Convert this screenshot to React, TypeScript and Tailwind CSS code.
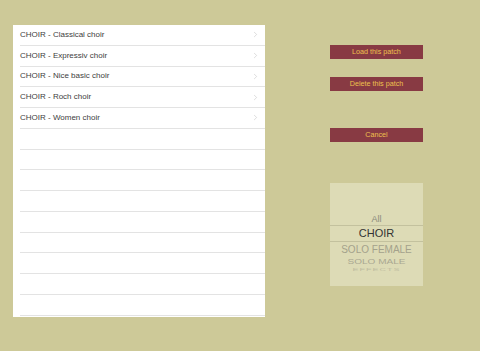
import { ChevronRight } from 'lucide-react';

const patches = [
  'CHOIR - Classical choir',
  'CHOIR - Expressiv choir',
  'CHOIR - Nice basic choir',
  'CHOIR - Roch choir',
  'CHOIR - Women choir',
];

const emptyRows = 9;

function PatchRow({ label }: { label?: string }) {
  return (
    <div className="pl-[7px] h-[20.75px]">
      <div className="h-full flex items-center justify-between pr-[5px] border-b border-[#e3e3e3]">
        <span className="text-[8px] text-[#404040]">{label}</span>
        {label && <ChevronRight size={9} strokeWidth={1.5} className="text-[#c4c4c4]" />}
      </div>
    </div>
  );
}

function ActionButton({ children, className = '' }: { children: string; className?: string }) {
  return (
    <button className={`w-[93px] h-[14px] bg-[#883a43] text-[#eec04e] text-[7.2px] leading-none flex items-center justify-center ${className}`}>
      {children}
    </button>
  );
}

export default function App() {
  return (
    <div
      className="w-[480px] h-[351px] bg-[#cdc998] flex pt-[25px] pl-[13px]"
      style={{ fontFamily: '"Liberation Sans", Arial, sans-serif' }}
    >
      {/* Patch list */}
      <div className="w-[252px] h-[292px] bg-white overflow-hidden">
        {patches.map(p => (
          <PatchRow key={p} label={p} />
        ))}
        {Array.from({ length: emptyRows }).map((_, i) => (
          <PatchRow key={i} />
        ))}
      </div>

      {/* Actions */}
      <div className="ml-[65px] pt-[20px] flex flex-col">
        <ActionButton>Load this patch</ActionButton>
        <ActionButton className="mt-[18px]">Delete this patch</ActionButton>
        <ActionButton className="mt-[37px]">Cancel</ActionButton>

        {/* Category picker */}
        <div className="mt-[41px] w-[93px] h-[103px] bg-[#dddbb6] flex flex-col items-center pt-[30px]">
          <div className="text-[9px] text-[#8a8a7c] leading-none h-[12px] flex items-center">All</div>
          <div className="w-full h-[17px] border-y border-[#c3c19e] flex items-center justify-center text-[11px] text-[#333] leading-none">
            CHOIR
          </div>
          <div className="text-[10px] text-[#a4a28c] leading-none mt-[2px] h-[12px] flex items-center">SOLO FEMALE</div>
          <div className="text-[10px] text-[#a9a791] leading-none h-[11px] flex items-center scale-y-[0.8]">SOLO MALE</div>
          <div className="text-[9px] text-[#bdbba0] leading-none h-[6px] flex items-center scale-y-[0.45] tracking-[1px]">EFFECTS</div>
        </div>
      </div>
    </div>
  );
}
